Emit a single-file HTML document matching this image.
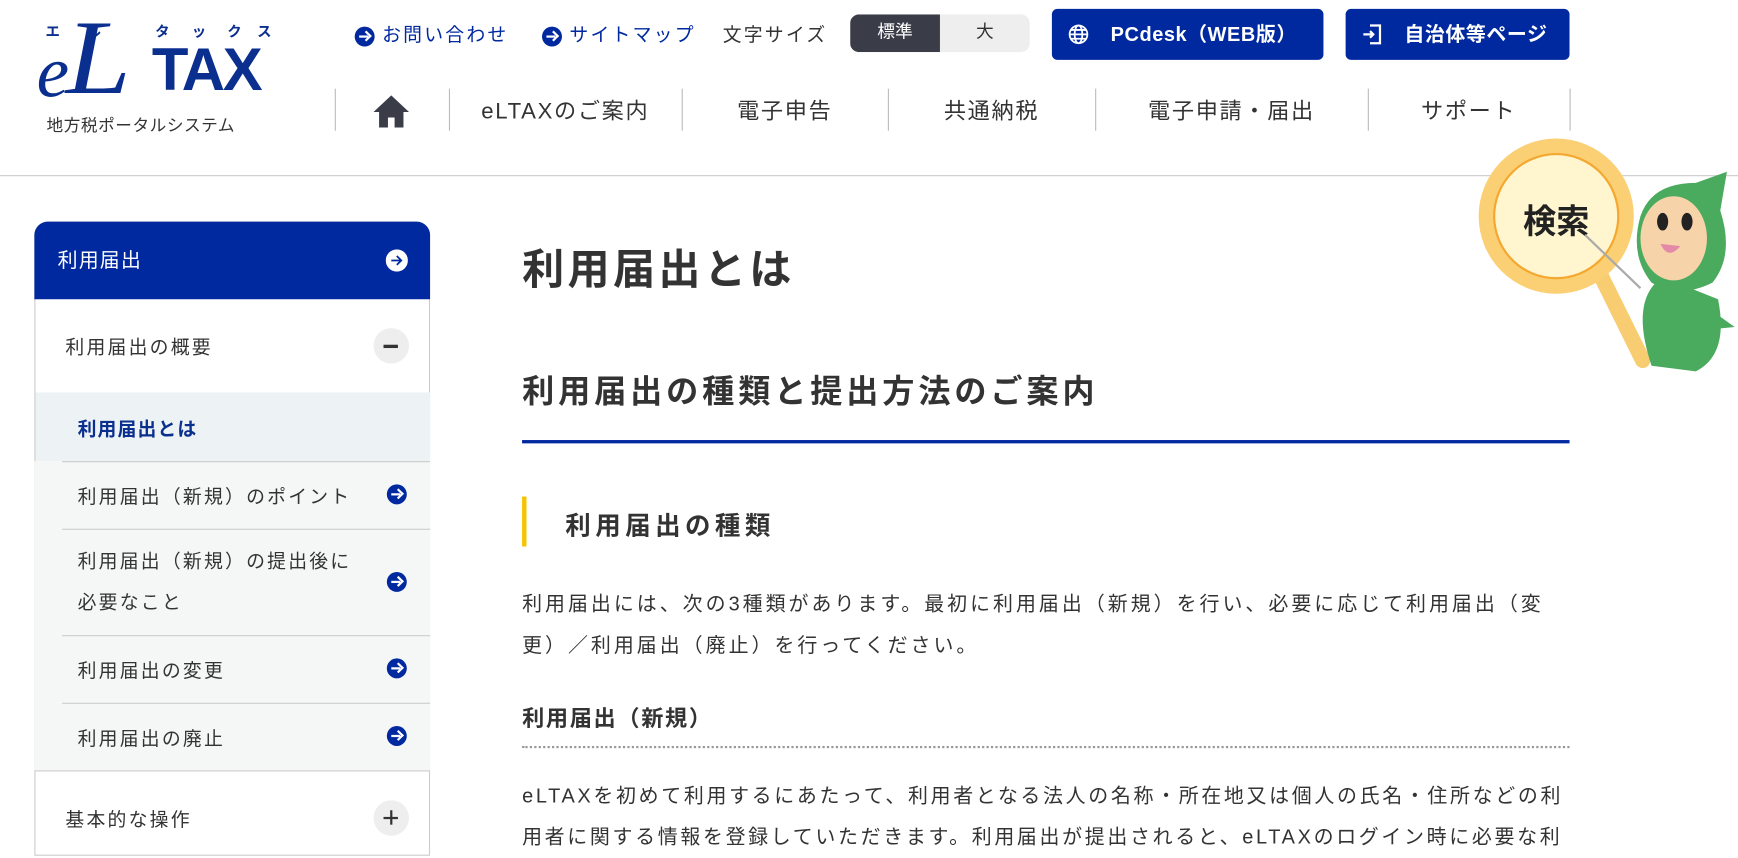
<!DOCTYPE html>
<html><head><meta charset="utf-8"><style>
html,body{margin:0;padding:0;width:1738px;height:841px;overflow:hidden;background:#fff}
#w{position:absolute;left:0;top:0;width:1568px;height:759px;transform:scale(1.10842);transform-origin:0 0;font-family:"Liberation Sans","Noto Sans CJK JP",sans-serif;color:#333}
.a{position:absolute;white-space:nowrap}
.ic{display:inline-block;width:18px;height:18px;border-radius:50%;background:#0029a0;position:relative;vertical-align:middle}
.ic:after{content:"";position:absolute;left:4px;top:8px;width:8px;height:2px;background:#fff}
.ic:before{content:"";position:absolute;left:7px;top:5px;width:5px;height:5px;border-top:2px solid #fff;border-right:2px solid #fff;transform:rotate(45deg)}
.sep{position:absolute;top:80px;width:1px;height:38px;background:#bbb}
.nav{position:absolute;top:84px;font-size:20px;color:#333;text-align:center;letter-spacing:1.5px}
.btn{position:absolute;top:8px;height:46px;background:#0029a0;border-radius:5px;color:#fff;font-weight:bold;font-size:18px;line-height:46px}
.si{position:absolute;left:31px;width:357px;background:#f5f7f7;font-size:17px;color:#333;letter-spacing:2px}
.si .t{position:absolute;left:39px}
.si .ic{position:absolute;left:318px}
.si .ln{position:absolute;left:25px;right:0;top:0;height:1px;background:#ccc}
.k{position:absolute;top:18px;font-size:13px;font-weight:bold;color:#0b2f8f}
</style></head><body><div id="w">
<!-- logo -->
<span class="k" style="left:41px">エ</span><span class="k" style="left:78px">ル</span><span class="k" style="left:140px">タ</span><span class="k" style="left:173px">ッ</span><span class="k" style="left:205px">ク</span><span class="k" style="left:232px">ス</span>
<div class="a" style="left:33px;top:44px;font-family:'Liberation Serif',serif;font-style:italic;font-size:66px;color:#0b2f8f;line-height:44px">e</div>
<div class="a" style="left:62px;top:14px;font-family:'Liberation Serif',serif;font-style:italic;font-size:96px;color:#0b2f8f;line-height:76px;transform:scaleX(1.1)">L</div>
<div class="a" style="left:137px;top:36px;font-size:54px;font-weight:bold;color:#0b2f8f;line-height:54px;letter-spacing:-2px">TAX</div>
<div class="a" style="left:42px;top:102px;font-size:15px;color:#333;letter-spacing:0.5px">地方税ポータルシステム</div>
<!-- top links -->
<div class="a" style="left:320px;top:17px;font-size:17px;color:#0029a0;letter-spacing:2px"><span class="ic"></span> お問い合わせ</div>
<div class="a" style="left:489px;top:17px;font-size:17px;color:#0029a0;letter-spacing:2px"><span class="ic"></span> サイトマップ</div>
<div class="a" style="left:652px;top:17px;font-size:17px;color:#333;letter-spacing:2px">文字サイズ</div>
<div class="a" style="left:767px;top:13px;width:162px;height:34px;border-radius:8px;background:#eee;overflow:hidden">
<div class="a" style="left:0;top:0;width:81px;height:34px;background:#3a3d48;color:#fff;text-align:center;line-height:34px;font-size:16px">標準</div>
<div class="a" style="left:81px;top:0;width:81px;height:34px;color:#333;text-align:center;line-height:34px;font-size:16px">大</div></div>
<div class="btn" style="left:949px;width:245px"><svg class="a" style="left:14px;top:13px" width="20" height="20" viewBox="0 0 20 20" fill="none" stroke="#fff" stroke-width="1.6"><circle cx="10" cy="10" r="8"/><ellipse cx="10" cy="10" rx="3.5" ry="8"/><path d="M2 10h16M3.5 6h13M3.5 14h13"/></svg><span class="a" style="left:53px;letter-spacing:0.5px">PCdesk（WEB版）</span></div>
<div class="btn" style="left:1214px;width:202px"><svg class="a" style="left:14px;top:12px" width="20" height="22" viewBox="0 0 20 22" fill="none" stroke="#fff" stroke-width="2"><path d="M8 3h9v16H8M2 11h9M8 8l3 3-3 3"/></svg><span class="a" style="left:53px;letter-spacing:0.5px">自治体等ページ</span></div>
<!-- nav -->
<div class="sep" style="left:302px"></div><div class="sep" style="left:405px"></div><div class="sep" style="left:615px"></div><div class="sep" style="left:801px"></div><div class="sep" style="left:988px"></div><div class="sep" style="left:1234px"></div><div class="sep" style="left:1416px"></div>
<svg class="a" style="left:336px;top:84px" width="34" height="32" viewBox="0 0 34 32"><path d="M17 2L1 17h5v14h8v-9h6v9h8V17h5z" fill="#3a3d48"/></svg>
<div class="nav" style="left:405px;width:210px">eLTAXのご案内</div>
<div class="nav" style="left:615px;width:186px">電子申告</div>
<div class="nav" style="left:801px;width:187px">共通納税</div>
<div class="nav" style="left:988px;width:246px">電子申請・届出</div>
<div class="nav" style="left:1234px;width:182px">サポート</div>
<div class="a" style="left:0;top:158px;width:1568px;height:1px;background:#ccc"></div>
<!-- sidebar -->
<div class="a" style="left:31px;top:200px;width:355px;height:570px;border:1px solid #ccc;border-radius:12px 12px 0 0;background:#fff"></div>
<div class="a" style="left:31px;top:200px;width:357px;height:70px;background:#0029a0;border-radius:12px 12px 0 0;color:#fff;font-size:18px;line-height:70px"><span style="margin-left:21px;letter-spacing:1px">利用届出</span>
<svg class="a" style="left:317px;top:25px;display:block" width="20" height="20" viewBox="0 0 20 20" fill="none" stroke="#0029a0" stroke-width="1.6"><circle cx="10" cy="10" r="10" fill="#fff" stroke="none"/><path d="M5 10h9M10 6l4 4-4 4"/></svg></div>
<div class="a" style="left:59px;top:299px;font-size:17px;letter-spacing:2px">利用届出の概要</div>
<div class="a" style="left:337px;top:296px;width:32px;height:32px;border-radius:50%;background:#eee"><div class="a" style="left:9px;top:15px;width:13px;height:3px;background:#333"></div></div>
<div class="a" style="left:32px;top:354px;width:356px;height:62px;background:#edf3f5"></div>
<div class="a" style="left:70px;top:373px;font-size:17px;font-weight:bold;color:#0b2f8f;letter-spacing:1px">利用届出とは</div>
<div class="si" style="top:416px;height:61px"><div class="ln"></div><span class="t" style="top:18px">利用届出（新規）のポイント</span><span class="ic" style="top:21px"></span></div>
<div class="si" style="top:477px;height:96px"><div class="ln"></div><span class="t" style="top:11px;line-height:37px">利用届出（新規）の提出後に<br>必要なこと</span><span class="ic" style="top:39px"></span></div>
<div class="si" style="top:573px;height:61px"><div class="ln"></div><span class="t" style="top:18px">利用届出の変更</span><span class="ic" style="top:21px"></span></div>
<div class="si" style="top:634px;height:61px"><div class="ln"></div><span class="t" style="top:18px">利用届出の廃止</span><span class="ic" style="top:21px"></span></div>
<div class="a" style="left:32px;top:695px;width:356px;height:1px;background:#ccc"></div>
<div class="a" style="left:59px;top:725px;font-size:17px;letter-spacing:2px">基本的な操作</div>
<div class="a" style="left:337px;top:722px;width:32px;height:32px;border-radius:50%;background:#eee"><div class="a" style="left:9px;top:15px;width:13px;height:2px;background:#333"></div><div class="a" style="left:15px;top:9px;width:2px;height:13px;background:#333"></div></div>
<!-- main -->
<div class="a" style="left:471px;top:212px;font-size:38px;font-weight:bold;color:#333;letter-spacing:3px">利用届出とは</div>
<div class="a" style="left:471px;top:330px;font-size:29px;font-weight:bold;color:#333;letter-spacing:3.5px">利用届出の種類と提出方法のご案内</div>
<div class="a" style="left:471px;top:397px;width:945px;height:3px;background:#0029a0"></div>
<div class="a" style="left:471px;top:448px;width:4px;height:45px;background:#f5c400"></div>
<div class="a" style="left:510px;top:455px;font-size:23px;font-weight:bold;color:#333;letter-spacing:4px">利用届出の種類</div>
<div class="a" style="left:471px;top:527px;font-size:18px;line-height:37px;color:#333;letter-spacing:2.7px">利用届出には、次の3種類があります。最初に利用届出（新規）を行い、必要に応じて利用届出（変<br>更）／利用届出（廃止）を行ってください。</div>
<div class="a" style="left:471px;top:632px;font-size:20px;font-weight:bold;color:#333;letter-spacing:1.5px">利用届出（新規）</div>
<div class="a" style="left:471px;top:673px;width:945px;border-top:2px dotted #999"></div>
<div class="a" style="left:471px;top:700px;font-size:18px;line-height:37px;color:#333;letter-spacing:2.4px">eLTAXを初めて利用するにあたって、利用者となる法人の名称・所在地又は個人の氏名・住所などの利<br>用者に関する情報を登録していただきます。利用届出が提出されると、eLTAXのログイン時に必要な利</div>
<!-- character -->
<svg class="a" style="left:1330px;top:120px" width="238" height="230" viewBox="0 0 238 230">
<path d="M110 120 L152 205" stroke="#f8cc70" stroke-width="14" stroke-linecap="round"/>
<circle cx="74" cy="75" r="70" fill="#fbd074"/>
<circle cx="74" cy="75" r="56" fill="#fff6cf" stroke="#f5a830" stroke-width="2"/>
<text x="74" y="90" text-anchor="middle" font-size="30" font-weight="bold" fill="#222" font-family="Liberation Sans,Noto Sans CJK JP,sans-serif">検索</text>
<path d="M170 130 Q140 150 160 210 L200 215 Q230 200 220 150 Z" fill="#4aaa5e"/>
<path d="M150 75 Q160 45 200 45 L228 35 L222 70 Q235 110 215 135 Q185 150 160 135 Q140 110 150 75Z" fill="#4aaa5e"/>
<ellipse cx="180" cy="95" rx="30" ry="38" fill="#f6d3a9"/>
<ellipse cx="170" cy="80" rx="5" ry="8" fill="#222"/><ellipse cx="192" cy="80" rx="5" ry="8" fill="#222"/>
<path d="M168 100 Q175 115 186 102 Z" fill="#e48aa8"/>
<path d="M100 92 L150 140" stroke="#aaa" stroke-width="2"/>
<path d="M200 150 L235 175 L205 178Z" fill="#4aaa5e"/>
</svg>
</div></body></html>
